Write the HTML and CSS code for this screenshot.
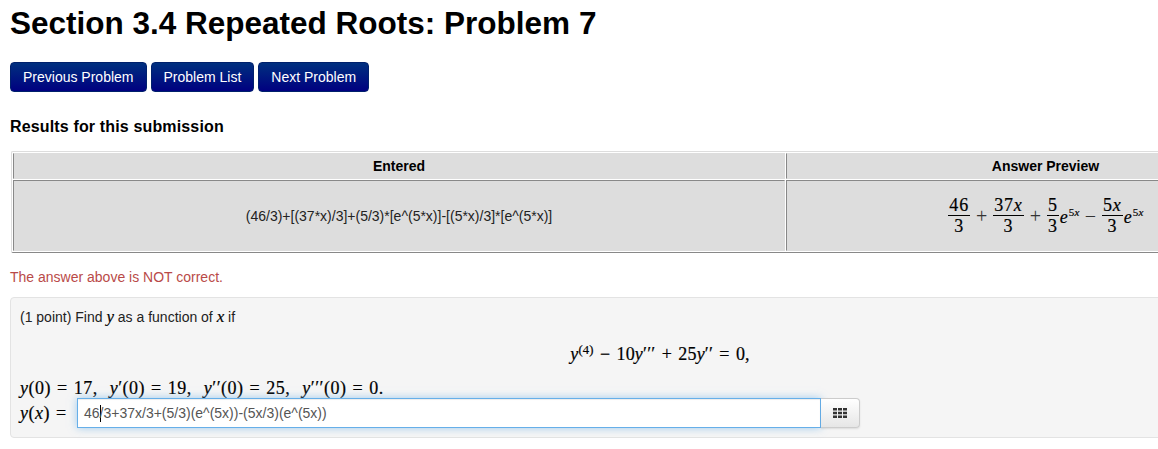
FILE: index.html
```html
<!DOCTYPE html>
<html lang="en">
<head>
    <meta charset="UTF-8">
    <title>Section 3.4 Repeated Roots: Problem 7</title>
    <link rel="stylesheet" href="styles.css">
</head>
<body>
    <div class="container">
        <h1>Section 3.4 Repeated Roots: Problem 7</h1>

        <div class="nav-buttons">
            <a class="nav-btn">Previous Problem</a>
            <a class="nav-btn">Problem List</a>
            <a class="nav-btn">Next Problem</a>
        </div>

        <h3>Results for this submission</h3>

        <table class="results">
            <tr class="head-row">
                <th class="col-entered">Entered</th>
                <th>Answer Preview</th>
            </tr>
            <tr class="answer-row">
                <td>(46/3)+[(37*x)/3]+(5/3)*[e^(5*x)]-[(5*x)/3]*[e^(5*x)]</td>
                <td>
                    <span class="math preview">
                        <span class="frac"><span class="num">46</span><span>3</span></span>
                        <span class="op">+</span>
                        <span class="frac"><span class="num">37<i>x</i></span><span>3</span></span>
                        <span class="op">+</span>
                        <span class="frac tight"><span class="num">5</span><span>3</span></span><i>e</i><sup>5<i>x</i></sup>
                        <span class="op">&minus;</span>
                        <span class="frac"><span class="num">5<i>x</i></span><span>3</span></span><i>e</i><sup>5<i>x</i></sup>
                    </span>
                </td>
            </tr>
        </table>

        <p class="wrong">The answer above is NOT correct.</p>

        <div class="well">
            <p class="intro">(1 point) Find <i class="math">y</i> as a function of <i class="math">x</i> if</p>
            <div class="math display"><i>y</i><sup>(4)</sup> <span class="op">&minus;</span> 10<i>y</i>&#8242;&#8242;&#8242; <span class="op">+</span> 25<i>y</i>&#8242;&#8242; <span class="op">=</span> 0,</div>
            <div class="math initial"><i>y</i>(0) = 17,&nbsp; <i>y</i>&#8242;(0) = 19,&nbsp; <i>y</i>&#8242;&#8242;(0) = 25,&nbsp; <i>y</i>&#8242;&#8242;&#8242;(0) = 0.</div>
            <div class="answer-line">
                <span class="math answer-label"><i>y</i>(<i>x</i>) =</span>
                <div class="answer-input">
                    <span>46</span><span class="caret"></span><span>/3+37x/3+(5/3)(e^(5x))-(5x/3)(e^(5x))</span>
                </div>
                <button class="grid-btn">
                    <svg width="14" height="10" viewBox="0 0 14 10">
                        <path d="M0 0h4v2.6H0zM5 0h4v2.6H5zM10 0h4v2.6h-4zM0 3.7h4v2.6H0zM5 3.7h4v2.6H5zM10 3.7h4v2.6h-4zM0 7.4h4V10H0zM5 7.4h4V10H5zM10 7.4h4V10h-4z" fill="#333"/>
                    </svg>
                </button>
            </div>
        </div>
    </div>
</body>
</html>
```

FILE: styles.css
```css
* {
    box-sizing: border-box;
}

html, body {
    overflow: hidden;
}

body {
    margin: 0;
    height: 449px;
    font-family: "Liberation Sans", Arial, sans-serif;
    font-size: 14px;
    line-height: 20px;
    color: #333;
    background: #fff;
}

.container {
    width: 1310px;
    padding-left: 10px;
}

h1 {
    margin: 0;
    padding-top: 4px;
    font-size: 31.5px;
    line-height: 38px;
    font-weight: bold;
    color: #000;
}

.nav-buttons {
    display: flex;
    gap: 4px;
    margin-top: 20px;
}

.nav-btn {
    height: 30px;
    padding: 0 12px;
    line-height: 29px;
    font-size: 14px;
    color: #fff;
    background: linear-gradient(#00307f, #000080);
    border: 1px solid #00206c;
    border-radius: 4px;
}

h3 {
    margin: 25px 0 0;
    font-size: 16px;
    line-height: 20px;
    font-weight: bold;
    color: #000;
    letter-spacing: 0.15px;
}

.results {
    width: 1296px;
    margin: 14px 0 0 1px;
    table-layout: fixed;
    border: 1px solid;
    border-color: #ddd #888 #888 #ddd;
    border-radius: 2px;
    border-spacing: 1px;
}

.results th, .results td {
    padding: 2px 5px;
    border: 1px solid;
    border-color: #888 #ddd #ddd #888;
    background: #ddd;
    text-align: center;
    vertical-align: middle;
    color: #222;
}

.results th {
    border-top-color: #ddd;
    color: #000;
    font-size: 14px;
    font-weight: bold;
}

.col-entered {
    width: 772px;
}

.head-row {
    height: 26px;
}

.answer-row {
    height: 71px;
}

.answer-row td:first-child {
    font-size: 14px;
}

.math {
    font-family: "Liberation Serif", "Times New Roman", serif;
    color: #000;
    -webkit-text-stroke: 0.2px #000;
}

.math sup {
    font-size: 70%;
    line-height: 0;
    vertical-align: 0.5em;
}

.preview {
    display: inline-flex;
    align-items: center;
    font-size: 18px;
}

.preview .op {
    margin: 0 5px;
    font-size: 20px;
    color: #333;
    -webkit-text-stroke: 0;
}

.preview > i {
    margin-top: 2px;
}

.preview sup {
    align-self: center;
    margin: 0 0 8px 1px;
    font-size: 11px;
    line-height: 12px;
    letter-spacing: 0.3px;
}

.frac {
    display: inline-flex;
    flex-direction: column;
    align-items: center;
    margin: 0 1px;
    line-height: 20px;
    letter-spacing: 0.8px;
}

.frac .num {
    padding: 0 1px;
    border-bottom: 1px solid #000;
}

.wrong {
    margin: 14px 0 0;
    color: #b94a48;
    font-size: 14px;
}

.well {
    height: 141px;
    margin-top: 10px;
    padding: 9px;
    background: #f5f5f5;
    border: 1px solid #e3e3e3;
    border-radius: 4px;
    color: #222;
}

.intro {
    margin: 0;
    font-size: 14px;
    line-height: 20px;
}

.intro .math {
    font-size: 17px;
}

.display {
    margin-top: 17px;
    text-align: center;
    font-size: 18px;
    line-height: 20px;
    word-spacing: 1.5px;
    letter-spacing: 0.2px;
}

.initial {
    margin-top: 14px;
    font-size: 18px;
    line-height: 20px;
    word-spacing: 1px;
    letter-spacing: 0.5px;
}

.answer-line {
    display: flex;
    align-items: center;
    height: 30px;
}

.answer-label {
    width: 57px;
    font-size: 18px;
    word-spacing: 1px;
    letter-spacing: 0.5px;
}

.answer-input {
    width: 744px;
    height: 30px;
    padding: 0 6px;
    display: flex;
    align-items: center;
    font-size: 14px;
    color: #555;
    background: #fff;
    border: 1px solid #66afe9;
    box-shadow: inset 0 1px 1px rgba(0, 0, 0, 0.075), 0 0 8px rgba(102, 175, 233, 0.6);
}

.caret {
    width: 1px;
    height: 17px;
    margin-right: -1px;
    background: #000;
}

.grid-btn {
    display: flex;
    align-items: center;
    justify-content: center;
    width: 39px;
    height: 30px;
    padding: 0;
    border: 1px solid #ccc;
    border-left: none;
    border-radius: 0 4px 4px 0;
    background: linear-gradient(#fff, #e6e6e6);
    box-shadow: 0 1px 2px rgba(0, 0, 0, 0.1);
}
```
